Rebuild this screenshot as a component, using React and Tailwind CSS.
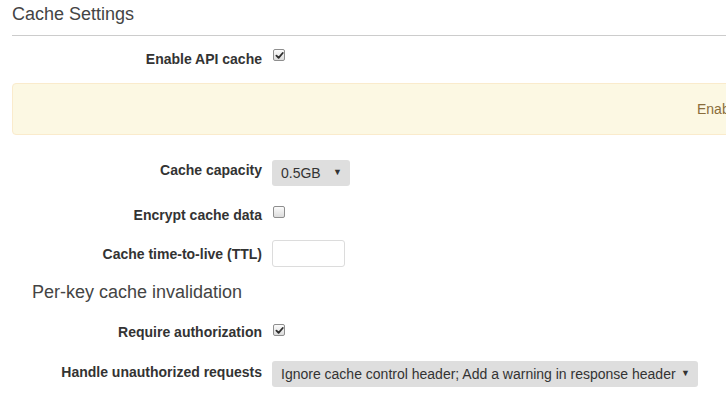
import React from 'react';

const Check = ({ checked }) => (
  <span className="mt-[0px] ml-[1px] flex h-[12px] w-[12px] items-center justify-center rounded-[2px] border border-[#8e8e8e] bg-gradient-to-b from-[#fbfbfb] to-[#dcdcdc]">
    {checked && (
      <svg viewBox="0 0 10 10" className="h-[9px] w-[9px]">
        <path d="M1.6 5.2 L4 7.6 L8.6 2.2" fill="none" stroke="#2d2d2d" strokeWidth="2" strokeLinecap="round" strokeLinejoin="round" />
      </svg>
    )}
  </span>
);

const Select = ({ value, width }) => (
  <div className={`flex h-[26px] items-center justify-between rounded-[3px] bg-[#dedede] pl-[9px] pr-[8px] text-[14px] text-[#333] ${width}`}>
    <span>{value}</span>
    <span className="text-[9px] text-[#333]">▼</span>
  </div>
);

const Row = ({ label, className = '', labelClass = '', children }) => (
  <div className={`flex ${className}`}>
    <label className={`w-[250px] shrink-0 text-right text-[14px] font-bold leading-[20px] text-[#333] ${labelClass}`}>
      {label}
    </label>
    <div className="ml-[10px] flex">{children}</div>
  </div>
);

export default function App() {
  return (
    <div className="h-[402px] w-[726px] overflow-hidden bg-white font-['Liberation_Sans',Arial,sans-serif]">
      <div className="w-[1100px] px-3">
        {/* Heading */}
        <h3 className="mt-[4px] border-b border-[#cccccc] pb-[11px] text-[18px] leading-[20px] text-[#444]">
          Cache Settings
        </h3>

        <Row label="Enable API cache" className="mt-[13px]">
          <Check checked />
        </Row>

        {/* Warning */}
        <div className="mt-[14px] rounded-[4px] border border-[#faebcc] bg-[#fcf8e3] py-[15px] pl-[684px] text-[14px] leading-[20px] whitespace-nowrap text-[#8a6d3b]">
          Enabling API cache can take up to 4 minutes to complete.
        </div>

        <Row label="Cache capacity" className="mt-[25px]">
          <Select value="0.5GB" width="w-[78px]" />
        </Row>

        <Row label="Encrypt cache data" className="mt-[19px]">
          <span className="mt-[1px] flex">
            <Check />
          </span>
        </Row>

        <Row label="Cache time-to-live (TTL)" className="mt-[15px] items-center">
          <input
            type="text"
            className="h-[27px] w-[73px] rounded-[3px] border border-[#dcdcdc] bg-white px-2 text-[14px] outline-none"
          />
        </Row>

        <h4 className="mt-[15px] pl-[20px] text-[18px] leading-[20px] text-[#444]">
          Per-key cache invalidation
        </h4>

        <Row label="Require authorization" className="mt-[20px]">
          <span className="mt-[2px] flex">
            <Check checked />
          </span>
        </Row>

        <Row label="Handle unauthorized requests" className="mt-[19px]" labelClass="pt-[1px]">
          <Select value="Ignore cache control header; Add a warning in response header" width="w-[426px]" />
        </Row>
      </div>
    </div>
  );
}
